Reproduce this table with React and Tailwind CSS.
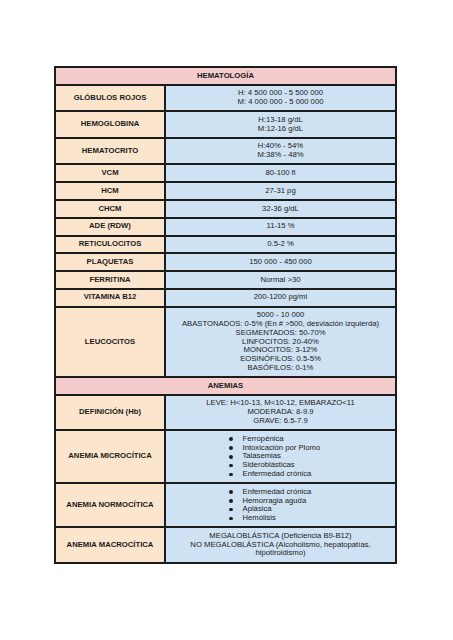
import React from 'react';

const hemato = [
  ['GLÓBULOS ROJOS', ['H: 4 500 000 - 5 500 000', 'M: 4 000 000 - 5 000 000']],
  ['HEMOGLOBINA', ['H:13-18 g/dL', 'M:12-16 g/dL']],
  ['HEMATOCRITO', ['H:40% - 54%', 'M:38% - 48%']],
  ['VCM', ['80-100 fl']],
  ['HCM', ['27-31 pg']],
  ['CHCM', ['32-36 g/dL']],
  ['ADE (RDW)', ['11-15 %']],
  ['RETICULOCITOS', ['0.5-2 %']],
  ['PLAQUETAS', ['150 000 - 450 000']],
  ['FERRITINA', ['Normal >30']],
  ['VITAMINA B12', ['200-1200 pg/ml']],
  ['LEUCOCITOS', [
    '5000 - 10 000',
    'ABASTONADOS: 0-5% (En # >500, desviación izquierda)',
    'SEGMENTADOS: 50-70%',
    'LINFOCITOS: 20-40%',
    'MONOCITOS: 3-12%',
    'EOSINÓFILOS: 0.5-5%',
    'BASÓFILOS: 0-1%',
  ]],
];

const anemias = [
  ['DEFINICIÓN (Hb)', ['LEVE: H<10-13, M<10-12, EMBARAZO<11', 'MODERADA: 8-9.9', 'GRAVE: 6.5-7.9']],
  ['ANEMIA MICROCÍTICA', ['Ferropénica', 'Intoxicación por Plomo', 'Talasemias', 'Sideroblásticas', 'Enfermedad crónica'], true],
  ['ANEMIA NORMOCÍTICA', ['Enfermedad crónica', 'Hemorragia aguda', 'Aplásica', 'Hemólisis'], true],
  ['ANEMIA MACROCÍTICA', ['MEGALOBLÁSTICA (Deficiencia B9-B12)', 'NO MEGALOBLÁSTICA (Alcoholismo, hepatopatías,', 'hipotiroidismo)']],
];

const cell = 'border-2 border-[#1c1c1c] py-[3.5px] px-[4px]';

function Header({ title }) {
  return (
    <tr>
      <td colSpan={2} className={`${cell} bg-[#f4cccc] text-center font-bold`}>{title}</td>
    </tr>
  );
}

function Row({ label, lines, list }) {
  return (
    <tr>
      <td className={`${cell} bg-[#fce5cd] text-center font-bold align-middle`}>{label}</td>
      <td className={`${cell} bg-[#cfe2f3] align-middle`}>
        {list ? (
          <div className="pl-[59px]">
            {lines.map((l) => (
              <div key={l} className="flex items-center">
                <span className="inline-block w-[3.5px] h-[3.5px] rounded-full bg-[#1c1c1c] mr-[10px]" />
                <span>{l}</span>
              </div>
            ))}
          </div>
        ) : (
          <div className="text-center">
            {lines.map((l) => <div key={l}>{l}</div>)}
          </div>
        )}
      </td>
    </tr>
  );
}

export default function App() {
  return (
    <div className="w-[453px] h-[640px] bg-white pt-[66px] pl-[54px]" style={{ fontFamily: '"Liberation Sans", Arial, sans-serif' }}>
      <table className="w-[343px] border-collapse text-[7.7px] leading-[8.78px] text-[#1a1a1a]">
        <colgroup>
          <col className="w-[110px]" />
          <col />
        </colgroup>
        <tbody>
          <Header title="HEMATOLOGÍA" />
          {hemato.map(([label, lines]) => <Row key={label} label={label} lines={lines} />)}
          <Header title="ANEMIAS" />
          {anemias.map(([label, lines, list]) => <Row key={label} label={label} lines={lines} list={list} />)}
        </tbody>
      </table>
    </div>
  );
}
